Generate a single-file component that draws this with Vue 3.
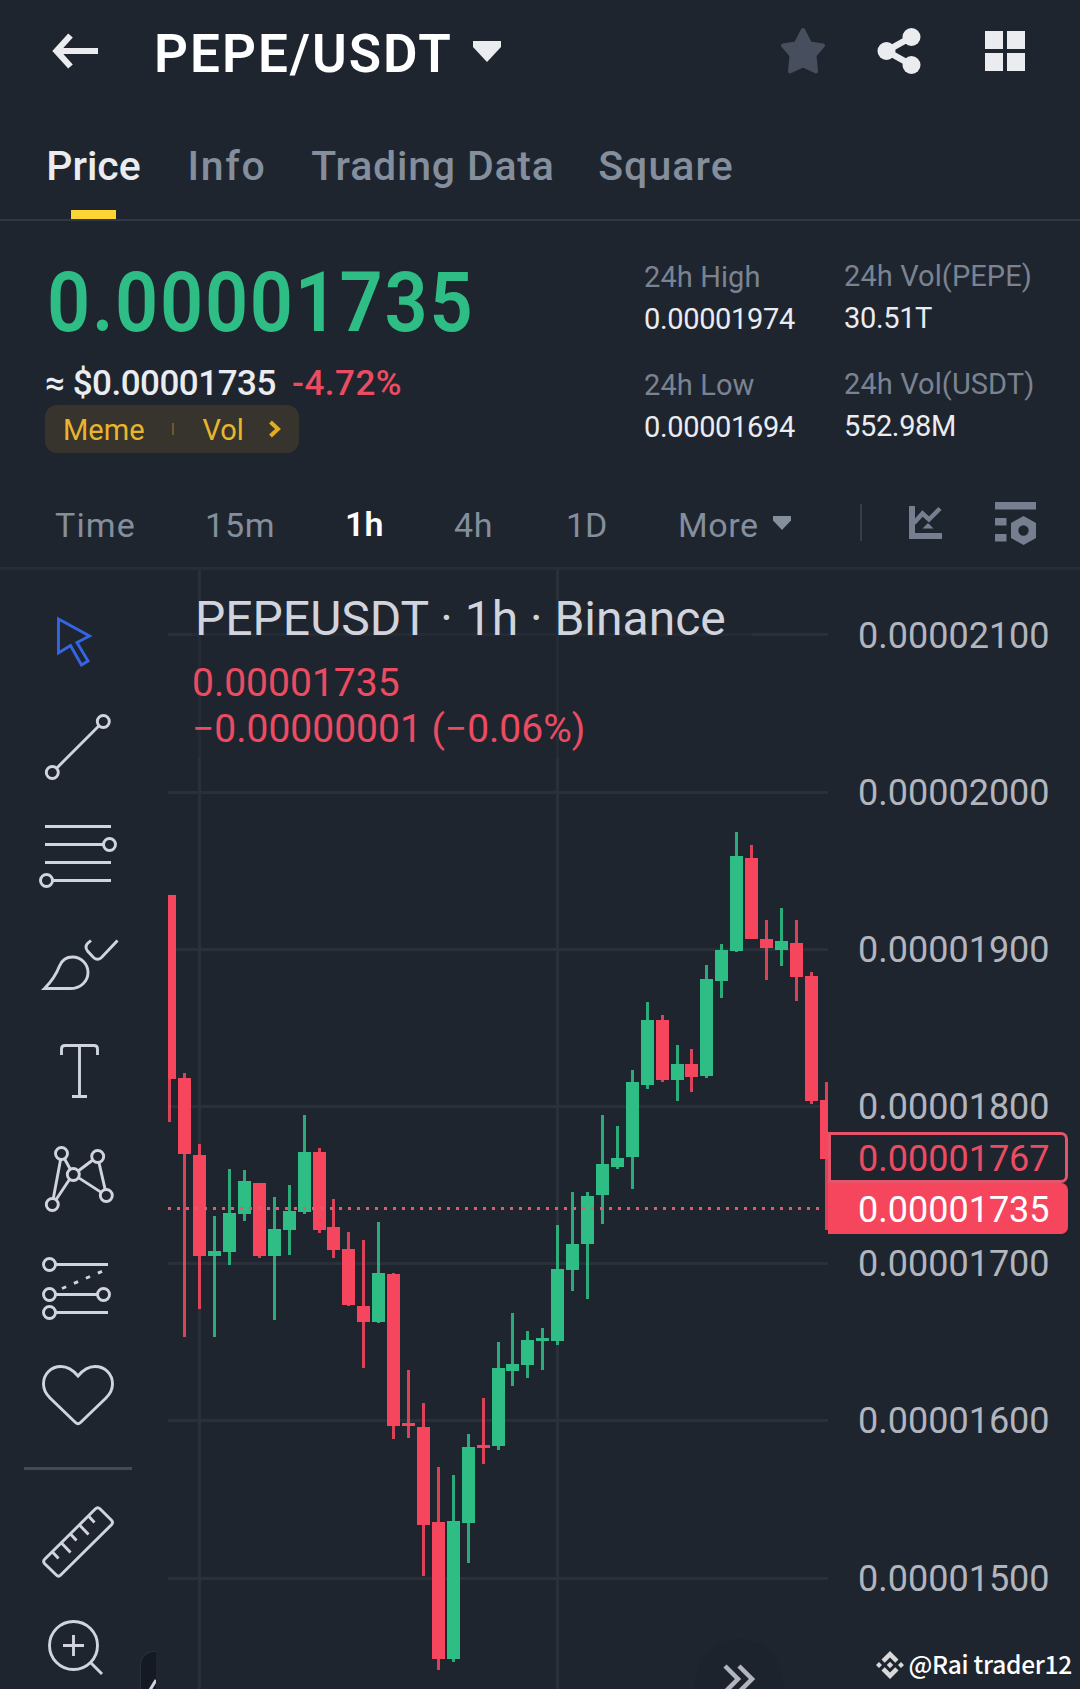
<template>
  <div class="page">
    <header class="header">
      <svg class="back" width="48" height="40" viewBox="0 0 48 40">
        <path d="M18.5 4.5 L4.5 20 L18.5 35.5 M5 20 H46" fill="none" stroke="#eaecef" stroke-width="6.2" />
      </svg>
      <h1 class="pair">PEPE/USDT</h1>
      <svg class="pair-caret" width="28" height="21" viewBox="0 0 28 21">
        <path d="M0 0 H28 V6 L14 21 L0 6 Z" fill="#eaecef" />
      </svg>
      <svg class="star" width="46" height="48" viewBox="0 0 46 48">
        <path d="M23 3 L30 16.5 L43 18.5 L34.5 28.5 L36 44.5 L23 38.5 L10 44.5 L11.5 28.5 L3 18.5 L16 16.5 Z" fill="#474f5e" stroke="#474f5e" stroke-width="4" stroke-linejoin="round" />
      </svg>
      <svg class="share" width="44" height="48" viewBox="0 0 44 48">
        <path d="M34.5 10 L9.5 24 L34.5 38" fill="none" stroke="#eaecef" stroke-width="6.5" />
        <circle cx="34.5" cy="10" r="9" fill="#eaecef" />
        <circle cx="9.5" cy="24" r="9" fill="#eaecef" />
        <circle cx="34.5" cy="38" r="9" fill="#eaecef" />
      </svg>
      <svg class="apps" width="40" height="40" viewBox="0 0 40 40">
        <path d="M0 0 H18 V18 H0 Z M22 0 H40 V18 H22 Z M0 22 H18 V40 H0 Z M22 22 H40 V40 H22 Z" fill="#eaecef" />
      </svg>
    </header>

    <nav class="tabs">
      <div v-for="tab in tabs" :key="tab.name" class="tab" :class="[tab.cls, { active: tab.name === activeTab }]" @click="activeTab = tab.name">
        <span>{{ tab.name }}</span>
      </div>
    </nav>

    <section class="summary">
      <div class="quote">
        <div class="last-price">0.00001735</div>
        <div class="fiat">
          <span class="fiat-price">≈ $0.00001735</span>
          <span class="change">-4.72%</span>
        </div>
        <div class="badge">
          <span>Meme</span>
          <i class="badge-line"></i>
          <span>Vol</span>
          <svg class="badge-arrow" width="14" height="18" viewBox="0 0 14 18">
            <path d="M2.5 2 L10 9 L2.5 16" fill="none" stroke="#e0ac24" stroke-width="4" />
          </svg>
        </div>
      </div>
      <div class="stats">
        <div v-for="(col, i) in stats" :key="i" class="stats-col">
          <div v-for="item in col" :key="item.label" class="stat">
            <div class="stat-label">{{ item.label }}</div>
            <div class="stat-value">{{ item.value }}</div>
          </div>
        </div>
      </div>
    </section>

    <div class="intervals">
      <span
        v-for="item in intervals"
        :key="item.name"
        class="interval"
        :class="[item.cls, { current: item.name === interval }]"
        @click="interval = item.name"
      >{{ item.name }}</span>
      <svg class="more-caret" width="18" height="14" viewBox="0 0 18 14">
        <path d="M0 0 H18 V4.5 L9 14 L0 4.5 Z" fill="#848e9c" />
      </svg>
      <i class="interval-line"></i>
      <svg class="indicator" width="34" height="34" viewBox="0 0 34 34">
        <path d="M0 0 H6 V27 H33 V33 H0 Z" fill="#767f90" />
        <path d="M5 17 L13.5 7.5 L20 13.5 L31 2.5" fill="none" stroke="#767f90" stroke-width="4.5" />
        <path d="M19 17 L24.5 22.5 H13.5 Z" fill="#767f90" />
      </svg>
      <svg class="settings" width="42" height="44" viewBox="0 0 42 44">
        <path d="M0 0 H41 V7.5 H0 Z M0 16 H11.5 V23.5 H0 Z M0 32 H11.5 V39.5 H0 Z" fill="#767f90" />
        <path fill-rule="evenodd" d="M28.5 14 L41 21 V36 L28.5 43 L16 36 V21 Z M28.5 23.3 A5.2 5.2 0 1 0 28.5 33.7 A5.2 5.2 0 1 0 28.5 23.3 Z" fill="#767f90" />
      </svg>
    </div>

    <main class="chart">
      <aside class="tools">
        <svg v-for="tool in tools" :key="tool.name" class="tool" :class="tool.name" viewBox="0 0 156 108">
          <path v-if="tool.path" :d="tool.path" />
          <path v-if="tool.dash" class="dash" :d="tool.dash" />
          <circle v-for="(c, i) in tool.circles" :key="i" :cx="c[0]" :cy="c[1]" :r="c[2] || 6" />
        </svg>
      </aside>

      <div class="plot">
        <svg class="canvas" width="660" height="1119" viewBox="168 570 660 1119">
          <g fill="#2a303a">
            <rect v-for="x in gridX" :key="'x' + x" :x="x" y="570" width="3" height="1119" />
            <rect v-for="y in gridY" :key="'y' + y" x="168" :y="y" width="660" height="3" />
          </g>
          <!-- the grid is dimmed behind the legend -->
          <rect x="192" y="600" width="560" height="158" fill="#1f252f" opacity="0.5" />
          <g v-for="(c, i) in candles" :key="i" :fill="c[1] ? '#2ebd85' : '#f6465d'">
            <rect class="wick" :x="c[0] - 1.5" :y="c[4]" width="3" :height="c[5] - c[4]" />
            <rect :x="c[0] - 6.5" :y="c[2]" width="13" :height="c[3] - c[2]" />
          </g>
          <path d="M168 1208.5 H822" stroke="#dc5c70" stroke-width="3" stroke-dasharray="3 6" />
        </svg>
        <div class="legend">
          <div class="legend-title">PEPEUSDT · 1h · Binance</div>
          <div class="legend-price">0.00001735</div>
          <div class="legend-change">−0.00000001 (−0.06%)</div>
        </div>
        <div class="collapse">
          <svg width="16" height="40" viewBox="0 0 16 40">
            <path d="M15 28 L6 43" stroke="#d1d4dc" stroke-width="3" />
          </svg>
        </div>
        <div class="scroll-end">
          <svg width="40" height="36" viewBox="0 0 40 36">
            <path d="M4 3 L17 16 L4 29 M18 3 L31 16 L18 29" fill="none" stroke="#b2b5be" stroke-width="4.5" />
          </svg>
        </div>
      </div>

      <div class="axis">
        <div v-for="p in axis" :key="p" class="axis-label">{{ p }}</div>
        <div class="tags">
          <div class="tag outline">0.00001767</div>
          <div class="tag solid">0.00001735</div>
        </div>
      </div>

      <div class="watermark">
        <svg width="28" height="28" viewBox="0 0 28 28" fill="#d9d9d9">
          <path d="M14 0 L22.5 8.5 L19.3 11.7 L14 6.4 L8.7 11.7 L5.5 8.5 Z M14 28 L22.5 19.5 L19.3 16.3 L14 21.6 L8.7 16.3 L5.5 19.5 Z" />
          <path d="M3 11 L6 14 L3 17 L0 14 Z M25 11 L28 14 L25 17 L22 14 Z M14 10.8 L17.2 14 L14 17.2 L10.8 14 Z" />
        </svg>
        <span>@Rai trader12</span>
      </div>
    </main>
  </div>
</template>

<script setup>
import { ref } from 'vue';

const activeTab = ref('Price');
const interval = ref('1h');

const tabs = [
  { name: 'Price', cls: 'price' },
  { name: 'Info', cls: 'info' },
  { name: 'Trading Data', cls: 'trading' },
  { name: 'Square', cls: 'square' },
];

const stats = [
  [
    { label: '24h High', value: '0.00001974' },
    { label: '24h Low', value: '0.00001694' },
  ],
  [
    { label: '24h Vol(PEPE)', value: '30.51T' },
    { label: '24h Vol(USDT)', value: '552.98M' },
  ],
];

const intervals = [
  { name: 'Time', cls: 'i-time' },
  { name: '15m', cls: 'i-15m' },
  { name: '1h', cls: 'i-1h' },
  { name: '4h', cls: 'i-4h' },
  { name: '1D', cls: 'i-1d' },
  { name: 'More', cls: 'i-more' },
];

// circles: [cx, cy, r]
const tools = [
  { name: 'cursor', path: 'M58.5 34 L89.5 51 L77 57.5 L88 76 L81.5 80 L70.5 60.5 L58.5 68 Z' },
  { name: 'line', path: 'M56.6 75.2 L99 32.8', circles: [[52.3, 79.5], [103.3, 28.5]] },
  { name: 'fib', path: 'M45 25.5 H111 M45 43.5 H103 M45 61.5 H111 M53 79.5 H111', circles: [[109.5, 43.5], [46.5, 79.5]] },
  { name: 'brush', path: 'M44.5 79.5 C51 73 56 66 59.5 57 C62 51 67 48 72.5 48 C81 48 88 55 88 63.5 C88 72 81 79.5 70 79.5 Z M91 31.5 L87.5 34.5 Q84.5 38 87.5 42 L93.5 48.5 Q97.5 52 101.5 48.5 L117.5 31.5' },
  { name: 'text', path: 'M61.5 38 V32 Q61.5 28.5 65 28.5 H94 Q97.5 28.5 97.5 32 V38 M79.5 28.5 V79.5 M72 79.5 H87' },
  { name: 'pattern', path: 'M60.6 34.4 L53.3 73.6 M64.5 33.7 L70.3 44.3 M78.2 46 L92.8 35 M98.9 37.4 L105.2 64.6 M69.6 54.3 L56 74.7 M78.4 52.6 L101.2 67.4', circles: [[61.5, 28.5], [97.7, 31.5], [73.3, 49.5], [52.3, 79.5], [106.3, 70.5]] },
  { name: 'forecast', path: 'M56 31.5 H108 M56 61.5 H97 M56 79.5 H108', dash: 'M62 55.5 L104 37.5', circles: [[49.5, 31.5], [49.5, 61.5], [103.5, 61.5], [49.5, 79.5]] },
  { name: 'heart', path: 'M78 35 C73 29 68 25.5 61 25.5 C51 25.5 43.5 33 43.5 43 C43.5 49 46 53 50 57 L75.5 81.5 Q78 84 80.5 81.5 L106 57 C110 53 112.5 49 112.5 43 C112.5 33 105 25.5 95 25.5 C88 25.5 83 29 78 35 Z' },
  { name: 'ruler', path: 'M95.5 20.8 Q97.7 18.6 99.9 20.8 L111.5 32.2 Q113.6 34.5 111.5 36.7 L60.7 87 Q58.5 89.2 56.3 87 L44.7 75.7 Q42.6 73.5 44.7 71.3 Z M88.5 28 L94.5 34.5 M79.5 37 L88.5 46.5 M70.5 46 L76.5 52.5 M61.5 55 L70.5 64.5 M52.5 64 L58.5 70.5' },
  { name: 'zoom', path: 'M63 49.5 H84 M73.5 39 V60 M91 67 L102 78', circles: [[73.5, 49.5, 24]] },
];

const gridX = [198, 556];
const gridY = [633, 791, 948, 1105, 1262, 1419, 1577];
const axis = ['0.00002100', '0.00002000', '0.00001900', '0.00001800', '0.00001700', '0.00001600', '0.00001500'];

// [center x, up, body top, body bottom, wick top, wick bottom]
const candles = [
  [169.5, 0, 895, 1079, 895, 1122],
  [184.5, 0, 1078, 1154, 1073, 1337],
  [199.5, 0, 1155, 1256, 1144, 1309],
  [214.5, 1, 1251, 1256, 1216, 1337],
  [229.5, 1, 1213, 1252, 1169, 1265],
  [244.5, 1, 1181, 1214, 1170, 1221],
  [259.5, 0, 1183, 1256, 1183, 1258],
  [274.5, 1, 1229, 1256, 1197, 1320],
  [289.5, 1, 1211, 1230, 1185, 1255],
  [304.5, 1, 1152, 1212, 1115, 1214],
  [319.5, 0, 1152, 1230, 1148, 1233],
  [333.5, 0, 1227, 1250, 1199, 1258],
  [348.5, 0, 1249, 1305, 1232, 1306],
  [363.5, 0, 1306, 1322, 1240, 1368],
  [378.5, 1, 1273, 1322, 1222, 1323],
  [393.5, 0, 1274, 1426, 1273, 1439],
  [408.5, 0, 1423, 1426, 1370, 1438],
  [423.5, 0, 1427, 1525, 1403, 1576],
  [438.5, 0, 1522, 1659, 1467, 1670],
  [453.5, 1, 1521, 1659, 1475, 1662],
  [468.5, 1, 1447, 1523, 1434, 1563],
  [483.5, 0, 1445, 1448, 1398, 1464],
  [498.5, 1, 1368, 1446, 1342, 1450],
  [512.5, 1, 1364, 1371, 1313, 1386],
  [527.5, 1, 1340, 1365, 1331, 1378],
  [542.5, 1, 1338, 1341, 1328, 1370],
  [557.5, 1, 1269, 1341, 1225, 1345],
  [572.5, 1, 1244, 1270, 1192, 1291],
  [587.5, 1, 1196, 1244, 1192, 1299],
  [602.5, 1, 1164, 1195, 1115, 1224],
  [617.5, 1, 1158, 1167, 1126, 1169],
  [632.5, 1, 1082, 1157, 1070, 1189],
  [647.5, 1, 1020, 1085, 1002, 1089],
  [662.5, 0, 1020, 1080, 1015, 1082],
  [677.5, 1, 1064, 1080, 1045, 1101],
  [691.5, 0, 1064, 1077, 1049, 1092],
  [706.5, 1, 979, 1076, 965, 1078],
  [721.5, 1, 950, 981, 944, 998],
  [736.5, 1, 856, 951, 832, 952],
  [751.5, 0, 858, 939, 845, 939],
  [766.5, 0, 939, 948, 920, 980],
  [781.5, 1, 941, 950, 908, 966],
  [796.5, 0, 943, 977, 920, 1001],
  [811.5, 0, 976, 1101, 972, 1104],
  [826.5, 0, 1100, 1159, 1082, 1230],
];
</script>

<style>
body {
  margin: 0;
  background: #1f252f;
}
</style>

<style scoped>
.page {
  width: 1080px;
  height: 1689px;
  overflow: hidden;
  background: #1f252f;
  color: #eaecef;
  font-family: Roboto, "Liberation Sans", sans-serif;
  white-space: nowrap;
}

svg {
  display: block;
  flex: none;
}

.header {
  display: flex;
  align-items: center;
  height: 102px;
  padding-left: 52px;
}

.pair {
  width: 316px;
  margin: 5px 0 0 54px;
  font-size: 53px;
  line-height: 60px;
  font-weight: 600;
  letter-spacing: 2px;
  color: #fff;
}

.pair-caret {
  margin-left: 3px;
}

.star {
  margin-left: 279px;
}

.share {
  margin-left: 51px;
}

.apps {
  margin-left: 64px;
}

.tabs {
  display: flex;
  height: 117px;
  padding-left: 46px;
  border-bottom: 2px solid #303843;
  font-size: 41px;
  line-height: 48px;
  font-weight: 500;
  color: #848e9c;
}

.tab {
  display: flex;
  flex-direction: column;
  align-items: center;
  justify-content: space-between;
  height: 77px;
  padding-top: 40px;
}

.tab.active {
  color: #eaecef;
}

.tab.active::after {
  content: "";
  width: 45px;
  height: 9px;
  background: #fcd535;
}

.tab.price {
  width: 95px;
}

.tab.info {
  width: 80px;
  margin-left: 46px;
  letter-spacing: 1.7px;
}

.tab.trading {
  width: 244px;
  margin-left: 44px;
  letter-spacing: 0.8px;
}

.tab.square {
  width: 136px;
  margin-left: 43px;
  letter-spacing: 1.1px;
}

.summary {
  display: flex;
  height: 263px;
}

.quote {
  width: 597px;
  padding: 37px 0 0 47px;
}

.last-price {
  font-size: 84px;
  line-height: 90px;
  font-weight: 600;
  letter-spacing: 1.9px;
  color: #2ebd85;
  transform: scaleX(0.9);
  transform-origin: 0 0;
}

.fiat {
  display: flex;
  height: 44px;
  margin-top: 14px;
  margin-left: -2px;
  margin-bottom: -1px;
  font-size: 35px;
  line-height: 44px;
  font-weight: 500;
}

.fiat-price {
  width: 247px;
  letter-spacing: -0.5px;
}

.change {
  letter-spacing: 0.5px;
  color: #ec4c62;
}

.badge {
  display: flex;
  align-items: center;
  box-sizing: border-box;
  width: 254px;
  height: 48px;
  margin-left: -2px;
  padding-left: 18px;
  border-radius: 12px;
  background: #36342c;
  font-size: 29px;
  color: #e8b62c;
}

.badge span {
  padding-top: 1px;
}

.badge-line {
  width: 2px;
  height: 12px;
  margin: 0 29px 0 27px;
  background: #6d5b2b;
}

.badge-arrow {
  margin-left: 24px;
}

.stats {
  display: flex;
  padding-top: 38px;
  font-size: 29px;
  line-height: 36px;
}

.stats-col {
  display: flex;
  flex-direction: column;
  gap: 30px;
  width: 200px;
}

.stats-col:last-child {
  margin-top: -1px;
}

.stat {
  display: flex;
  flex-direction: column;
  gap: 6px;
}

.stat-label {
  letter-spacing: 0.1px;
  color: #7a8392;
}

.stat-value {
  letter-spacing: -0.35px;
}

.intervals {
  display: flex;
  align-items: center;
  height: 83px;
  padding-left: 55px;
  border-bottom: 3px solid #262d37;
  font-size: 34px;
  color: #848e9c;
}

.interval {
  margin-top: -1px;
}

.interval.current {
  margin-top: -3px;
  font-weight: 600;
  color: #fff;
}

.i-time {
  width: 150px;
  letter-spacing: 1.1px;
}

.i-15m {
  width: 140px;
  letter-spacing: 0.8px;
}

.i-1h {
  width: 109px;
}

.i-4h {
  width: 112px;
  letter-spacing: 0.6px;
}

.i-1d {
  width: 112px;
}

.i-more {
  width: 95px;
  letter-spacing: 0.6px;
}

.more-caret {
  margin-top: -6px;
}

.interval-line {
  width: 2px;
  height: 37px;
  margin-left: 69px;
  margin-top: -7px;
  background: #363e4a;
}

.indicator {
  margin: -6px 0 0 47px;
}

.settings {
  margin: -4px 0 0 52px;
}

.chart {
  position: relative;
  display: flex;
  height: 1119px;
}

.tools {
  display: flex;
  flex-direction: column;
  width: 168px;
  padding-top: 15px;
  /* separator between drawing tools and ruler / zoom */
  background: linear-gradient(#434956, #434956) 24px 897px / 108px 3px no-repeat;
}

.tool {
  width: 156px;
  height: 108px;
  fill: none;
  stroke: #d1d4dc;
  stroke-width: 2.9;
}

.tool.cursor {
  stroke: #3465e6;
}

.tool.ruler {
  margin-top: 39px;
}

.dash {
  stroke-dasharray: 4.5 8.5;
}

.plot {
  position: relative;
  width: 660px;
}

.wick {
  opacity: 0.88;
}

.legend {
  position: absolute;
  top: 19px;
  left: 24px;
  color: #ec4c62;
}

.legend-title {
  margin-left: 3px;
  font-size: 48px;
  line-height: 60px;
  color: #d1d4dc;
}

.legend-price {
  margin-top: 11px;
  font-size: 39px;
  line-height: 46px;
}

.legend-change {
  font-size: 39px;
  line-height: 46px;
}

.collapse {
  position: absolute;
  left: -28px;
  bottom: 0;
  width: 15px;
  height: 37px;
  overflow: hidden;
  border: 1px solid #2a303b;
  border-width: 1px 0 0 1px;
  border-radius: 14px 0 0 0;
  background: #141924;
}

.scroll-end {
  position: absolute;
  left: 527px;
  bottom: -38px;
  box-sizing: border-box;
  width: 88px;
  height: 88px;
  padding: 24px 0 0 26px;
  border-radius: 44px;
  background: #1d232c;
}

.axis {
  position: relative;
  width: 252px;
  padding-top: 36px;
}

.axis-label {
  height: 157.1px;
  padding-left: 30px;
  font-size: 36px;
  line-height: 60px;
  color: #b2b5be;
}

.tags {
  position: absolute;
  top: 562px;
  left: 0;
  width: 240px;
}

.tag {
  box-sizing: border-box;
  height: 51px;
  padding-left: 30px;
  border-radius: 0 7px 7px 0;
  font-size: 36px;
  line-height: 54px;
}

.tag.outline {
  padding-left: 27px;
  border: 3px solid #e4546a;
  line-height: 48px;
  color: #ec4c62;
  background: #1f252f;
}

.tag.solid {
  background: #f6465d;
  color: #fff;
}

.watermark {
  position: absolute;
  right: 8px;
  bottom: 7px;
  display: flex;
  align-items: center;
  gap: 4px;
  font-family: "Noto Sans CJK SC", sans-serif;
  font-size: 24.5px;
  line-height: 36px;
  letter-spacing: -0.25px;
  font-weight: 500;
  color: #fff;
}

.watermark svg {
  margin-top: 1px;
}
</style>
